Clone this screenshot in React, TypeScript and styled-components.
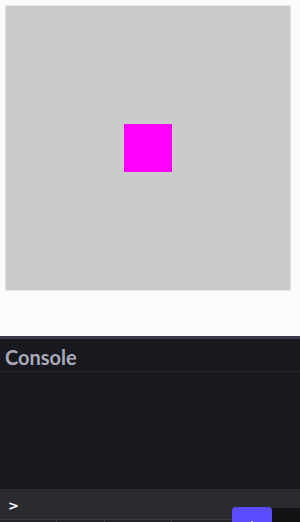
import React from 'react';
import styled, { createGlobalStyle } from 'styled-components';

const GlobalStyle = createGlobalStyle`
  html, body {
    margin: 0;
    padding: 0;
    background: #fcfbfd;
    font-family: Lato, 'Noto Sans', sans-serif;
    overflow: hidden;
  }
`;

const Page = styled.div`
  position: relative;
  width: 300px;
  height: 522px;
  overflow: hidden;
`;

const Preview = styled.div`
  height: 336px;
  padding: 5px 0 0 5px;
  box-sizing: border-box;
`;

const Canvas = styled.div`
  width: 286px;
  height: 286px;
  box-sizing: border-box;
  border: 1px solid #e2e1e5;
  background: #cbcacd;
  display: flex;
  align-items: center;
  justify-content: center;
`;

const Square = styled.div`
  width: 48px;
  height: 48px;
  background: #ff00ff;
`;

const ConsolePanel = styled.div`
  display: flex;
  flex-direction: column;
  background: #18191e;
  border-top: 3px solid #3a3b46;
`;

const Header = styled.div`
  height: 33px;
  display: flex;
  align-items: center;
  padding: 3px 0 0 5px;
  border-bottom: 1px solid #23242b;
  box-sizing: border-box;
`;

const Title = styled.h2`
  margin: 0;
  font-size: 20px;
  font-weight: 700;
  color: #a9a9b9;
`;

const Output = styled.div`
  height: 117px;
`;

const InputRow = styled.div`
  height: 30px;
  background: #2a2b30;
  display: flex;
  align-items: center;
  padding: 3px 0 0 8px;
  box-sizing: border-box;
`;

const Prompt = styled.span`
  color: #ffffff;
  font-size: 13px;
  font-weight: 900;
  font-family: 'DejaVu Sans', sans-serif;
`;

const Tabs = styled.div`
  height: 24px;
  display: flex;
  background: #222328;
  border-top: 1px solid #3a3b45;
`;

const Tab = styled.div<{ w: number }>`
  width: ${(p) => p.w}px;
  flex-shrink: 0;
  border-right: 1px solid #3a3b45;
`;

const RunButton = styled.button`
  position: absolute;
  left: 232px;
  top: 507px;
  width: 40px;
  height: 32px;
  border: none;
  border-radius: 4px 4px 0 0;
  background: #5b4dff;
  padding: 0;
`;

const Dot = styled.span`
  position: absolute;
  left: 19px;
  top: 14px;
  width: 2px;
  height: 2px;
  background: #c9c4ff;
`;

const DarkButton = styled.div`
  position: absolute;
  left: 272px;
  top: 508px;
  width: 40px;
  height: 30px;
  background: #121214;
`;

export default function App() {
  return (
    <>
      <GlobalStyle />
      <Page>
        <Preview>
          <Canvas>
            <Square />
          </Canvas>
        </Preview>
        <ConsolePanel>
          <Header>
            <Title>Console</Title>
          </Header>
          <Output />
          <InputRow>
            <Prompt>&gt;</Prompt>
          </InputRow>
          <Tabs>
            <Tab w={56} />
            <Tab w={47} />
            <Tab w={66} />
            <Tab w={62} />
          </Tabs>
        </ConsolePanel>
        <RunButton aria-label="run">
          <Dot />
        </RunButton>
        <DarkButton />
      </Page>
    </>
  );
}
